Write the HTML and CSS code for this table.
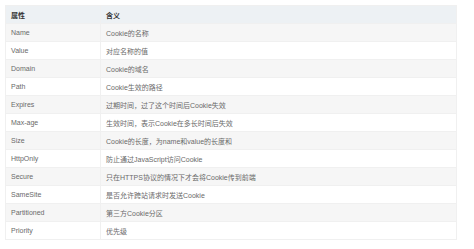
FILE: index.html
```html
<!DOCTYPE html>
<html lang="zh">
<head>
<meta charset="utf-8">
<link rel="stylesheet" href="styles.css">
</head>
<body>
<div class="wrap">
<table class="attr-table">
  <thead>
    <tr><th class="c1">属性</th><th>含义</th></tr>
  </thead>
  <tbody>
    <tr><td>Name</td><td>Cookie的名称</td></tr>
    <tr><td>Value</td><td>对应名称的值</td></tr>
    <tr><td>Domain</td><td>Cookie的域名</td></tr>
    <tr><td>Path</td><td>Cookie生效的路径</td></tr>
    <tr><td>Expires</td><td>过期时间，过了这个时间后Cookie失效</td></tr>
    <tr><td>Max-age</td><td>生效时间，表示Cookie在多长时间后失效</td></tr>
    <tr><td>Size</td><td>Cookie的长度，为name和value的长度和</td></tr>
    <tr><td>HttpOnly</td><td>防止通过JavaScript访问Cookie</td></tr>
    <tr><td>Secure</td><td>只在HTTPS协议的情况下才会将Cookie传到前端</td></tr>
    <tr><td>SameSite</td><td>是否允许跨站请求时发送Cookie</td></tr>
    <tr><td>Partitioned</td><td>第三方Cookie分区</td></tr>
    <tr><td>Priority</td><td>优先级</td></tr>
  </tbody>
</table>
</div>
</body>
</html>
```
FILE: styles.css
```css
html, body {
  margin: 0;
  padding: 0;
  background: #ffffff;
}
.wrap {
  padding: 5px 17px 0 5px;
}
.attr-table {
  width: 100%;
  border-collapse: collapse;
  font-family: "Liberation Sans", "Noto Sans CJK SC", sans-serif;
  font-size: 7px;
  color: #6a6a6a;
  border: 1px solid #f0f0f0;
}
.attr-table th,
.attr-table td {
  height: 18px;
  padding: 0 0 0 5px;
  text-align: left;
  vertical-align: middle;
  border: 1px solid #f0f0f0;
  box-sizing: border-box;
  white-space: nowrap;
}
.attr-table th {
  background: #edf1f4;
  color: #333333;
  font-weight: bold;
}
.attr-table .c1 {
  width: 95px;
}
.attr-table tbody tr:nth-child(odd) td {
  background: #f6f6f6;
}
```
